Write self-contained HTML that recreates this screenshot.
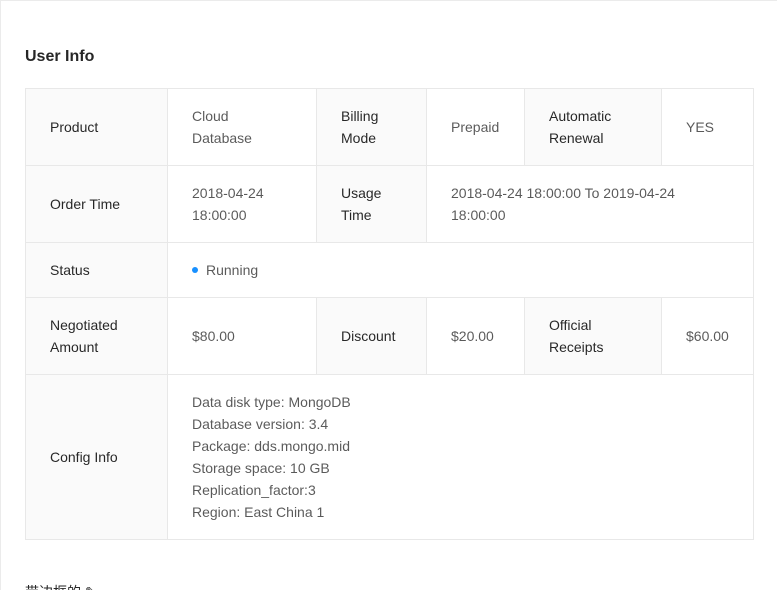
<!DOCTYPE html>
<html><head><meta charset="utf-8"><style>
html,body{margin:0;width:777px;height:590px;overflow:hidden;}
body{background:#fff;font-family:"Liberation Sans","Noto Sans CJK SC",sans-serif;font-size:14px;position:relative;}
.card{position:absolute;left:0;top:0;width:800px;height:620px;border:1px solid #ebebeb;box-sizing:border-box;}
h3{position:absolute;left:25px;top:47px;margin:0;font-size:16px;font-weight:bold;color:rgba(0,0,0,.85);line-height:20px;}
table{position:absolute;left:25px;top:88px;width:728px;border-collapse:collapse;table-layout:fixed;}
td{border:1px solid #e8e8e8;padding:0 24px;line-height:22px;color:rgba(0,0,0,.65);vertical-align:middle;}
td.l{background:#fafafa;color:rgba(0,0,0,.85);}
.dot{display:inline-block;width:6px;height:6px;border-radius:50%;background:#1890ff;margin-right:8px;vertical-align:middle;position:relative;top:-1px}
.bt{position:absolute;left:25px;top:582px;color:rgba(0,0,0,.85);font-size:14px;line-height:20px;}
</style></head><body>
<div class="card"></div>
<h3>User Info</h3>
<table>
<colgroup><col style="width:142px"><col style="width:149px"><col style="width:110px"><col style="width:98px"><col style="width:137px"><col style="width:92px"></colgroup>
<tr style="height:77px"><td class="l">Product</td><td>Cloud Database</td><td class="l">Billing Mode</td><td>Prepaid</td><td class="l">Automatic Renewal</td><td>YES</td></tr>
<tr style="height:77px"><td class="l">Order Time</td><td>2018-04-24 18:00:00</td><td class="l">Usage Time</td><td colspan="3">2018-04-24 18:00:00 To 2019-04-24 18:00:00</td></tr>
<tr style="height:55px"><td class="l">Status</td><td colspan="5"><span class="dot"></span>Running</td></tr>
<tr style="height:77px"><td class="l">Negotiated Amount</td><td>$80.00</td><td class="l">Discount</td><td>$20.00</td><td class="l">Official Receipts</td><td>$60.00</td></tr>
<tr style="height:165px"><td class="l">Config Info</td><td colspan="5">Data disk type: MongoDB<br>Database version: 3.4<br>Package: dds.mongo.mid<br>Storage space: 10 GB<br>Replication_factor:3<br>Region: East China 1</td></tr>
</table>
<div class="bt">带边框的 ✎</div>
</body></html>
